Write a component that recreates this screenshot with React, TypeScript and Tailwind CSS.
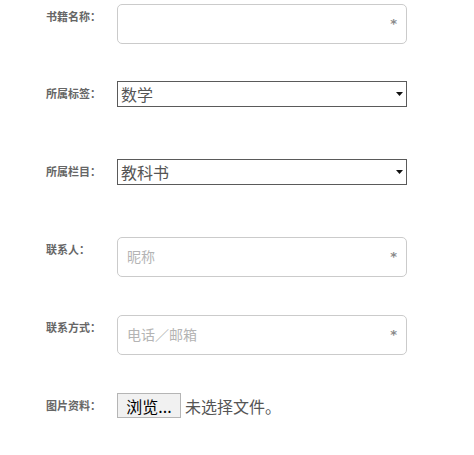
import React from "react";

const font = '"Noto Sans CJK SC", "Noto Sans", sans-serif';

function Label({ children }: { children: React.ReactNode }) {
  return (
    <div className="w-[117px] shrink-0 pl-[46px] pt-[5px] text-[11px] font-bold leading-[14px] text-[#666]">
      {children}
    </div>
  );
}

function TextBox({ placeholder }: { placeholder?: string }) {
  return (
    <div className="relative flex h-[40px] w-[290px] items-center rounded-[5px] border border-[#cbcbcb] bg-white pl-[9px]">
      {placeholder ? (
        <span className="-mt-[2px] text-[14px] leading-none text-[#b4b4b4]">{placeholder}</span>
      ) : null}
      <span
        className="absolute right-[9px] top-[12px] text-[13px] font-bold leading-none text-[#8a8a8a]"
        style={{ fontFamily: '"DejaVu Sans", sans-serif' }}
      >
        *
      </span>
    </div>
  );
}

function SelectBox({ value }: { value: string }) {
  return (
    <div className="flex h-[26px] w-[290px] items-center justify-between border border-[#5a5a5a] bg-white pl-[3px] pr-[3px]">
      <span className="text-[16px] leading-none text-[#555]">{value}</span>
      <svg width="7" height="4" viewBox="0 0 7 4">
        <polygon points="0,0 7,0 3.5,4" fill="#111" />
      </svg>
    </div>
  );
}

export default function App() {
  return (
    <div className="min-h-[455px] w-[474px] bg-white pt-[4px]" style={{ fontFamily: font }}>
      <div className="flex h-[77px] items-start">
        <Label>书籍名称：</Label>
        <TextBox />
      </div>
      <div className="flex h-[78px] items-start">
        <Label>所属标签：</Label>
        <SelectBox value="数学" />
      </div>
      <div className="flex h-[78px] items-start">
        <Label>所属栏目：</Label>
        <SelectBox value="教科书" />
      </div>
      <div className="flex h-[78px] items-start">
        <Label>联系人：</Label>
        <TextBox placeholder="昵称" />
      </div>
      <div className="flex h-[78px] items-start">
        <Label>联系方式：</Label>
        <TextBox placeholder="电话／邮箱" />
      </div>
      <div className="flex h-[62px] items-start">
        <Label>图片资料：</Label>
        <div className="flex items-center">
          <div className="flex h-[25px] w-[64px] items-center justify-center border border-[#b5b5b5] bg-[#f1f1f1] text-[16px] leading-none text-black">
            浏览...
          </div>
          <span className="ml-[4px] text-[16px] leading-none text-[#555]">未选择文件。</span>
        </div>
      </div>
    </div>
  );
}
